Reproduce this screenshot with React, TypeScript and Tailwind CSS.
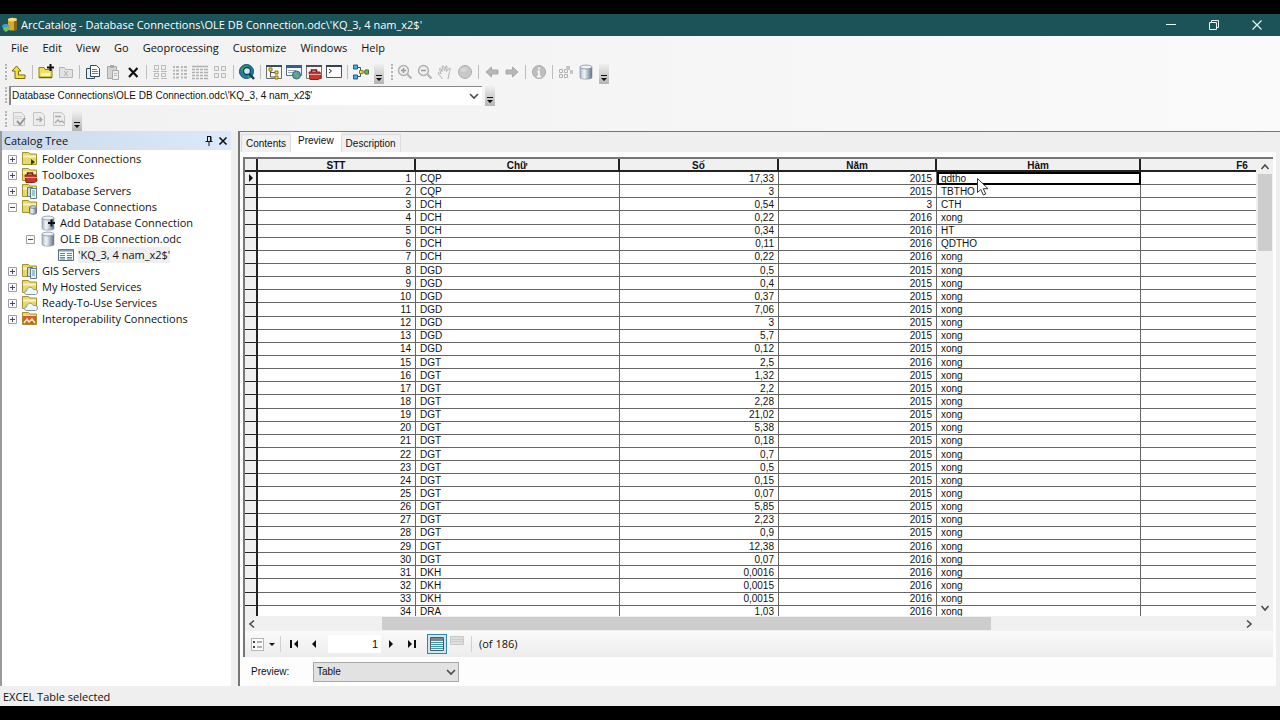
import { useState } from "react";
import type { ReactNode } from "react";

interface Tool {
  label: string;
  icon: ReactNode;
}

interface TreeNode {
  label: string;
  icon: ReactNode;
  depth: number;
  state: "open" | "closed" | "leaf";
  selected?: boolean;
}

type Row = [string, string, string, string];

// STT is the row index, the rest: Chữ, Số, Năm, Hàm
const ROWS: Row[] = [
  ["CQP", "17,33", "2015", "qdtho"],
  ["CQP", "3", "2015", "TBTHO"],
  ["DCH", "0,54", "3", "CTH"],
  ["DCH", "0,22", "2016", "xong"],
  ["DCH", "0,34", "2016", "HT"],
  ["DCH", "0,11", "2016", "QDTHO"],
  ["DCH", "0,22", "2016", "xong"],
  ["DGD", "0,5", "2015", "xong"],
  ["DGD", "0,4", "2015", "xong"],
  ["DGD", "0,37", "2015", "xong"],
  ["DGD", "7,06", "2015", "xong"],
  ["DGD", "3", "2015", "xong"],
  ["DGD", "5,7", "2015", "xong"],
  ["DGD", "0,12", "2015", "xong"],
  ["DGT", "2,5", "2016", "xong"],
  ["DGT", "1,32", "2015", "xong"],
  ["DGT", "2,2", "2015", "xong"],
  ["DGT", "2,28", "2015", "xong"],
  ["DGT", "21,02", "2015", "xong"],
  ["DGT", "5,38", "2015", "xong"],
  ["DGT", "0,18", "2015", "xong"],
  ["DGT", "0,7", "2015", "xong"],
  ["DGT", "0,5", "2015", "xong"],
  ["DGT", "0,15", "2015", "xong"],
  ["DGT", "0,07", "2015", "xong"],
  ["DGT", "5,85", "2015", "xong"],
  ["DGT", "2,23", "2015", "xong"],
  ["DGT", "0,9", "2015", "xong"],
  ["DGT", "12,38", "2016", "xong"],
  ["DGT", "0,07", "2016", "xong"],
  ["DKH", "0,0016", "2016", "xong"],
  ["DKH", "0,0015", "2016", "xong"],
  ["DKH", "0,0015", "2016", "xong"],
  ["DRA", "1,03", "2016", "xong"],
];

const MENUS = ["File", "Edit", "View", "Go", "Geoprocessing", "Customize", "Windows", "Help"];

function Svg({ children }: { children: ReactNode }) {
  return (
    <svg viewBox="0 0 16 16" className="h-4 w-4 shrink-0" fill="none" aria-hidden="true">
      {children}
    </svg>
  );
}

function Folder({ children }: { children?: ReactNode }) {
  return (
    <Svg>
      <path d="M.5 13.500v-12h6l1.500 1.500h6.500v10.500z" fill="#e6d86c" stroke="#a3922f" />
      <path d="M1 5.500h13" stroke="#fbf6bd" strokeWidth="2" />
      {children}
    </Svg>
  );
}

const cylinder = (
  <>
    <path d="M2 3v10.500c0 2.200 12 2.200 12 0V3z" fill="url(#metal)" stroke="#8390a0" strokeWidth=".6" />
    <ellipse cx="8" cy="3" rx="6" ry="1.900" fill="#eef3f8" stroke="#8793a2" strokeWidth=".8" />
  </>
);

const serverBox = (
  <>
    <path d="M5.500 4.500h5v9h-5z" fill="#c9dde2" stroke="#5f7d88" />
    <path d="M8.500 5.500h6v10h-6z" fill="#e3eff2" stroke="#5f7d88" />
    <path d="M10 8h3M10 10h3M10 12h3" stroke="#5f9aa8" />
  </>
);

const cloud = (
  <path
    d="M4 15.500c-2-.5-2-3.500.5-3.500 0-4 5.500-5 7-1.500 3-.5 4 1 4 2.500s-1 2.500-2 2.500z"
    fill="#f3f8fc"
    stroke="#7f98ad"
  />
);

const toolbox = (
  <>
    <path d="M5.500 8V6h5v2" stroke="#6d1a16" strokeWidth="1.500" />
    <path d="M3 8h11l1 6-3 1.500H4z" fill="#c9382f" stroke="#8b201b" />
    <path d="M3 10.500h12" stroke="#f0a59c" />
  </>
);

const FILE_TOOLS: Tool[][] = [
  [
    {
      label: "Up One Level",
      icon: (
        <Svg>
          <path d="M5.500 2 10 7H7.500v4H14v3.500H4V7H1z" fill="#f7e03c" stroke="#7a6a10" />
        </Svg>
      ),
    },
  ],
  [
    {
      label: "Connect To Folder",
      icon: (
        <Svg>
          <path d="M1 13.500v-10h5l1 2h7v8z" fill="#efe057" stroke="#8f7f1d" />
          <path d="M3 10.500h9" stroke="#fff9b0" strokeWidth="3" />
          <path d="M1 13.500h13" stroke="#6f6415" strokeWidth="1.500" />
          <path d="M12.500 0v7M9 3.500h7" stroke="#111" strokeWidth="2" />
        </Svg>
      ),
    },
    {
      label: "Disconnect From Folder",
      icon: (
        <Svg>
          <path d="M1.500 13.500v-10h5l1 2h7v8z" fill="#e3e3e3" stroke="#b5b5b5" />
          <path d="m6 7 4 5m0-5-4 5" stroke="#b0b0b0" />
        </Svg>
      ),
    },
  ],
  [
    {
      label: "Copy",
      icon: (
        <Svg>
          <path d="M1.500 4.500h8v10h-8z" fill="#e5f0f7" stroke="#31495c" />
          <path d="M5.500 1.500h6l3 3v8h-9z" fill="#fff" stroke="#31495c" />
          <path d="M7 5.500h5M7 7.500h6M7 9.500h6" stroke="#4f87ad" />
        </Svg>
      ),
    },
    {
      label: "Paste",
      icon: (
        <Svg>
          <path d="M2.500 2.500h9v12h-9z" fill="#d3d3d3" stroke="#a8a8a8" />
          <path d="M5 1h4v3H5z" fill="#aaa" />
          <path d="M7.500 6.500h6v9h-6z" fill="#eee" stroke="#a8a8a8" />
          <path d="M9 9.500h3M9 11.500h3" stroke="#b5b5b5" />
        </Svg>
      ),
    },
    {
      label: "Delete",
      icon: (
        <Svg>
          <path d="m4 4 8.500 9M12.500 4 4 13" stroke="#111" strokeWidth="2.200" />
        </Svg>
      ),
    },
  ],
  [
    {
      label: "Large Icons",
      icon: (
        <Svg>
          <path d="M2.500 1.500h4v4h-4zM9.500 1.500h4v4h-4zM2.500 9.500h4v3h-4zM9.500 9.500h4v3h-4z" stroke="#b9b9b9" />
          <path d="M1 7.500h6M9 7.500h6M1 14.500h6M9 14.500h6" stroke="#b9b9b9" />
        </Svg>
      ),
    },
    {
      label: "List",
      icon: (
        <Svg>
          <path
            d="M1 3h2m1 0h3M9 3h2m1 0h3M1 6.500h2m1 0h3M9 6.500h2m1 0h3M1 10h2m1 0h3M9 10h2m1 0h3M1 13.500h2m1 0h3M9 13.500h2m1 0h3"
            stroke="#b9b9b9"
            strokeWidth="2"
          />
        </Svg>
      ),
    },
    {
      label: "Details",
      icon: (
        <Svg>
          <path
            d="M0 2.500h16M0 5.500h3m1 0h3m1 0h3m1 0h4M0 8.500h3m1 0h3m1 0h3m1 0h4M0 11.500h3m1 0h3m1 0h3m1 0h4M0 14.500h3m1 0h3m1 0h3m1 0h4"
            stroke="#b0b0b0"
            strokeWidth="1.400"
          />
        </Svg>
      ),
    },
    {
      label: "Thumbnails",
      icon: (
        <Svg>
          <path d="M2.500 2.500h4v4h-4zM9.500 2.500h4v4h-4zM2.500 9.500h4v4h-4zM9.500 9.500h4v4h-4z" fill="#ededed" stroke="#b9b9b9" />
        </Svg>
      ),
    },
  ],
  [
    {
      label: "Launch ArcMap",
      icon: (
        <Svg>
          <circle cx="7.500" cy="7.500" r="7" fill="#1e7fa5" stroke="#174f70" />
          <path d="M2 5c2-3 5-4 7-3l-2 4-3 3zM8 12l4-2 1 2-4 2z" fill="#3f9e54" />
          <circle cx="8" cy="7" r="3.500" fill="#c8ecf5" stroke="#0d3c5c" strokeWidth="1.300" />
          <path d="m10.500 10 4.500 5" stroke="#133c5c" strokeWidth="2.500" />
        </Svg>
      ),
    },
  ],
  [
    {
      label: "Catalog Tree",
      icon: (
        <Svg>
          <path d="M.5 1.500h15v13H.5z" fill="#f7f8f4" stroke="#66706d" />
          <path d="M0 2h16" stroke="#3c4c5f" strokeWidth="2" />
          <path d="M4.500 5v8h5M4.500 8.500h5" stroke="#555" />
          <path d="M3 4h3v3H3zM9 7h3v3H9zM9 12h3v3H9z" fill="#eedc43" stroke="#877619" />
        </Svg>
      ),
    },
    {
      label: "Item Description",
      icon: (
        <Svg>
          <path d="M.5 1.500h15v10H.5z" fill="#f5f8fb" stroke="#5e6b7a" />
          <path d="M0 2.500h16" stroke="#345d92" strokeWidth="3" />
          <path d="M2 6.500h8M2 8.500h5" stroke="#9aa9b8" />
          <circle cx="10.500" cy="11" r="4" fill="#4c99c9" stroke="#386a83" />
          <path d="M8 10c1-3 3-2 3 0s3 1 2 3-4 0-5-3z" fill="#6cad55" />
        </Svg>
      ),
    },
    {
      label: "ArcToolbox",
      icon: (
        <Svg>
          <path d="M.5 1.500h15v13H.5z" fill="#f6f6f6" stroke="#777" />
          <path d="M0 2h16" stroke="#5b4b57" strokeWidth="2" />
          {toolbox}
        </Svg>
      ),
    },
    {
      label: "Python",
      icon: (
        <Svg>
          <path d="M.5 1.500h15v12H.5z" fill="#fdfdfd" stroke="#4d5561" />
          <path d="M0 2h16" stroke="#33415a" strokeWidth="2" />
          <path d="m3 5 2.500 2L3 9" stroke="#222" />
        </Svg>
      ),
    },
  ],
  [
    {
      label: "ModelBuilder",
      icon: (
        <Svg>
          <path d="M4 3.500h3.500v9H4M7.500 8h6" stroke="#44555f" />
          <path d="M.5 1h4v4h-4zM.5 11h4v4h-4z" fill="#46aee0" stroke="#1e628d" />
          <path d="M6.500 6.500h3.500v3H6.500z" fill="#f1dd3b" stroke="#8d7c16" />
          <path d="M12 6h3.500v4H12z" fill="#6abe51" stroke="#39772a" />
        </Svg>
      ),
    },
  ],
];

const GEO_TOOLS: Tool[][] = [
  [
    {
      label: "Zoom In",
      icon: (
        <Svg>
          <circle cx="6.500" cy="6.500" r="5" fill="#eee" stroke="#b0b0b0" strokeWidth="1.400" />
          <path d="M6.500 4v5M4 6.500h5" stroke="#999" strokeWidth="1.400" />
          <path d="m10.500 10.500 4 4" stroke="#b3b3b3" strokeWidth="2.200" />
        </Svg>
      ),
    },
    {
      label: "Zoom Out",
      icon: (
        <Svg>
          <circle cx="6.500" cy="6.500" r="5" fill="#eee" stroke="#b0b0b0" strokeWidth="1.400" />
          <path d="M4 6.500h5" stroke="#999" strokeWidth="1.400" />
          <path d="m10.500 10.500 4 4" stroke="#b3b3b3" strokeWidth="2.200" />
        </Svg>
      ),
    },
    {
      label: "Pan",
      icon: (
        <Svg>
          <path
            d="M5 15c0-2-3.500-4-4-6 1-1 2 .5 3 1L2.500 4.500c1-1 1.500 0 2.500 3L5.500 2c1-1 1.500 0 2 5l1.500-5c1-.5 1.500 0 .5 5.500L12.500 4c1 0 1 .5-.5 6l-1 5"
            fill="#f2f2f2"
            stroke="#b4b4b4"
          />
        </Svg>
      ),
    },
    {
      label: "Full Extent",
      icon: (
        <Svg>
          <circle cx="8" cy="8" r="6.500" fill="#c8c8c8" stroke="#b0b0b0" />
          <path d="M4 5c2-2 5-2 6 0s-2 3-4 3-3-1-2-3z" fill="#d6d6d6" />
        </Svg>
      ),
    },
  ],
  [
    {
      label: "Go Back",
      icon: (
        <Svg>
          <path d="m2 8 5.500-5v3H14v4H7.500v3z" fill="#b7b7b7" stroke="#a8a8a8" />
        </Svg>
      ),
    },
    {
      label: "Go Forward",
      icon: (
        <Svg>
          <path d="M14 8 8.500 3v3H2v4h6.500v3z" fill="#b7b7b7" stroke="#a8a8a8" />
        </Svg>
      ),
    },
  ],
  [
    {
      label: "Identify",
      icon: (
        <Svg>
          <circle cx="8" cy="8" r="6.500" fill="#bebebe" stroke="#a9a9a9" />
          <path d="M8 3.500v2M6.500 7.500H8V12M6 12.500h4" stroke="#f5f5f5" strokeWidth="1.800" />
        </Svg>
      ),
    },
  ],
  [
    {
      label: "Create Thumbnail",
      icon: (
        <Svg>
          <path d="M1.500 5.500h3v3h-3zM6.500 5.500h3v3h-3zM1.500 10.500h3v3h-3zM6.500 10.500h3v3h-3z" stroke="#b2b2b2" />
          <path d="M8 2h4v4H8zM12 6h3v4h-3z" fill="#c6c6c6" />
        </Svg>
      ),
    },
    { label: "Database", icon: <Svg>{cylinder}</Svg> },
  ],
];

const METADATA_TOOLS: Tool[][] = [
  [
    {
      label: "Validate Metadata",
      icon: (
        <Svg>
          <path d="M2.500 1.500h8l3 3v10h-11z" fill="#ececec" stroke="#c5c5c5" />
          <path d="M4 5.500h7M4 7.500h7" stroke="#d3d3d3" />
          <path d="m6 10 3 3.500L14 7" stroke="#969696" strokeWidth="2" />
        </Svg>
      ),
    },
    {
      label: "Export Metadata",
      icon: (
        <Svg>
          <path d="M2.500 1.500h8l3 3v10h-11z" fill="#ececec" stroke="#c5c5c5" />
          <path d="M5 8.500h6M8.500 6l2.500 2.500L8.500 11" stroke="#ababab" strokeWidth="1.300" />
        </Svg>
      ),
    },
    {
      label: "Import Metadata",
      icon: (
        <Svg>
          <path d="M2.500 1.500h8l3 3v10h-11z" fill="#ececec" stroke="#c5c5c5" />
          <path d="M4 5.500h6M4 12l3-3 2 2 2-1 2 2" stroke="#ababab" strokeWidth="1.300" />
        </Svg>
      ),
    },
  ],
];

const TREE: TreeNode[] = [
  {
    label: "Folder Connections",
    depth: 0,
    state: "closed",
    icon: (
      <Folder>
        <path d="M9 8v6l4-3z" fill="#3d3a18" />
      </Folder>
    ),
  },
  { label: "Toolboxes", depth: 0, state: "closed", icon: <Folder>{toolbox}</Folder> },
  { label: "Database Servers", depth: 0, state: "closed", icon: <Folder>{serverBox}</Folder> },
  {
    label: "Database Connections",
    depth: 0,
    state: "open",
    icon: (
      <Folder>
        <path d="M7.500 8v6c0 1.500 7 1.500 7 0V8z" fill="url(#metal)" stroke="#6d7884" />
        <ellipse cx="11" cy="8" rx="3.500" ry="1.200" fill="#f2f5f8" stroke="#6d7884" />
      </Folder>
    ),
  },
  {
    label: "Add Database Connection",
    depth: 1,
    state: "leaf",
    icon: (
      <Svg>
        {cylinder}
        <path d="M11.500 4.500v7M8 8h7" stroke="#111" strokeWidth="2" />
      </Svg>
    ),
  },
  { label: "OLE DB Connection.odc", depth: 1, state: "open", icon: <Svg>{cylinder}</Svg> },
  {
    label: "'KQ_3, 4 nam_x2$'",
    depth: 2,
    state: "leaf",
    selected: true,
    icon: (
      <Svg>
        <path d="M.5 2.500h15v11H.5z" fill="#f4f9fb" stroke="#596d7a" />
        <path d="M1 3.500h14" stroke="#7c9bad" strokeWidth="2" />
        <path d="M2 6.500h5M9 6.500h5M2 8.500h5M9 8.500h5M2 10.500h5M9 10.500h5M2 12h5M9 12h5" stroke="#5b87a0" />
      </Svg>
    ),
  },
  { label: "GIS Servers", depth: 0, state: "closed", icon: <Folder>{serverBox}</Folder> },
  { label: "My Hosted Services", depth: 0, state: "closed", icon: <Folder>{cloud}</Folder> },
  { label: "Ready-To-Use Services", depth: 0, state: "closed", icon: <Folder>{cloud}</Folder> },
  {
    label: "Interoperability Connections",
    depth: 0,
    state: "closed",
    icon: (
      <Folder>
        <path d="M1 5h13v8H1z" fill="#dd5a25" />
        <path d="m2 12 3-4 2 3 3-3 3 4" stroke="#fff0c9" strokeWidth="1.500" />
      </Folder>
    ),
  },
];

const TREE_INDENT = ["pl-[6px]", "pl-6", "pl-[44px]"];

function Grip() {
  return <span className="h-4 w-1 shrink-0 border-l-2 border-dotted border-[#b5b5b5]" />;
}

function Overflow({ label }: { label: string }) {
  return (
    <button
      type="button"
      aria-label={label}
      className="ml-[3px] flex h-5 w-[10px] shrink-0 items-end justify-center self-end bg-linear-to-b from-[#f0f0f0] to-[#b4b4b4] pb-[3px]"
    >
      <svg viewBox="0 0 6 6" className="h-[6px] w-[6px]" aria-hidden="true">
        <path d="M0 0h6v1H0zM0 3h6L3 6z" fill="#111" />
      </svg>
    </button>
  );
}

function ToolGroups({ groups }: { groups: Tool[][] }) {
  return (
    <div className="flex items-center">
      {groups.map((tools, i) => (
        <div key={i} className="flex items-center">
          {i > 0 && <span className="mx-[3px] h-[14px] w-px bg-[#bdbdbd]" />}
          {tools.map((tool) => (
            <button
              key={tool.label}
              type="button"
              aria-label={tool.label}
              className="flex h-5 w-5 items-center justify-center"
            >
              {tool.icon}
            </button>
          ))}
        </div>
      ))}
    </div>
  );
}

function Chevron({ d }: { d: string }) {
  return (
    <svg viewBox="0 0 10 10" className="h-[10px] w-[10px]" fill="none" aria-hidden="true">
      <path d={d} stroke="#4b4b4b" strokeWidth="1.600" />
    </svg>
  );
}

function TitleBar() {
  return (
    <header className="flex h-[22px] shrink-0 items-center bg-[#1b5358] text-white">
      <svg viewBox="0 0 16 16" className="ml-[2px] h-4 w-4" fill="none" aria-hidden="true">
        <path d="M6 2v10c0 2 9 2 9 0V2z" fill="#d9a927" />
        <path d="M12 2h3v11l-3 1z" fill="#8f6510" />
        <ellipse cx="10.500" cy="2.500" rx="4.500" ry="1.800" fill="#f8e07d" />
        <path d="M0 9c2-3 6-3 7 0 1 4-3 6-5 5z" fill="#3f9bd2" />
        <path d="M1 12c2-3 4-1 5-3l2 3-4 3z" fill="#79bf43" />
      </svg>
      <h1 className="ml-[3px] grow truncate">
        ArcCatalog - Database Connections\OLE DB Connection.odc\'KQ_3, 4 nam_x2$'
      </h1>
      <div className="flex text-[#e8f3f4]">
        <button type="button" aria-label="Minimize" className="flex h-5 w-[43px] items-center justify-center">
          <svg viewBox="0 0 10 10" className="h-[10px] w-[10px]" aria-hidden="true">
            <path d="M0 4.500h10" stroke="currentColor" />
          </svg>
        </button>
        <button type="button" aria-label="Restore" className="flex h-5 w-[43px] items-center justify-center">
          <svg viewBox="0 0 10 10" className="h-[10px] w-[10px]" fill="none" aria-hidden="true">
            <path d="M.5 2.500h7v7h-7zM2.500 2.500v-2h7v7h-2" stroke="currentColor" />
          </svg>
        </button>
        <button type="button" aria-label="Close" className="mr-[2px] flex h-5 w-[43px] items-center justify-center">
          <svg viewBox="0 0 10 10" className="h-[10px] w-[10px]" aria-hidden="true">
            <path d="m.5.5 9 9M9.500.5l-9 9" stroke="currentColor" strokeWidth="1.200" />
          </svg>
        </button>
      </div>
    </header>
  );
}

function CatalogTree() {
  return (
    <aside className="flex w-[231px] shrink-0 flex-col border-l-2 border-[#9a9a9a] bg-white">
      <div className="flex h-[19px] shrink-0 items-center bg-linear-to-r from-[#ccd9e9] to-[#dbe9f8] pl-[2px] pr-px">
        <h2 className="grow">Catalog Tree</h2>
        <button type="button" aria-label="Auto Hide" className="flex h-4 w-[14px] items-center justify-center">
          <svg viewBox="0 0 10 10" className="h-[10px] w-[10px]" fill="none" aria-hidden="true">
            <path d="M3 .5h4v5M3.500.5v5M1.500 5.500h7M5 6v4M6.500 1v4" stroke="#111" />
          </svg>
        </button>
        <button type="button" aria-label="Close Catalog Tree" className="flex h-4 w-[14px] items-center justify-center">
          <svg viewBox="0 0 10 10" className="h-[10px] w-[10px]" aria-hidden="true">
            <path d="m1.500 1.500 7 7M8.500 1.500l-7 7" stroke="#111" strokeWidth="1.600" />
          </svg>
        </button>
      </div>
      <ul className="pt-px">
        {TREE.map((node) => (
          <li key={node.label} className={"flex h-4 items-center " + TREE_INDENT[node.depth]}>
            {node.state === "leaf" ? (
              node.depth < 2 && <span className="w-[10px] shrink-0" />
            ) : (
              <button
                type="button"
                aria-label={(node.state === "open" ? "Collapse " : "Expand ") + node.label}
                className="w-[10px] shrink-0"
              >
                <svg viewBox="0 0 9 9" className="h-[9px] w-[9px]" fill="none" aria-hidden="true">
                  <path d="M.5.5h8v8h-8z" fill="#fafafa" stroke="#a0a0a0" />
                  <path d={node.state === "open" ? "M2 4.500h5" : "M2 4.500h5M4.500 2v5"} stroke="#3a4d70" />
                </svg>
              </button>
            )}
            <button type="button" className={"flex items-center gap-1 " + (node.depth === 2 ? "pl-3" : "pl-1")}>
              {node.icon}
              <span className={node.selected ? "bg-[#efefef]" : ""}>{node.label}</span>
            </button>
          </li>
        ))}
      </ul>
    </aside>
  );
}

function DataTable() {
  const head =
    "h-[13px] border-b-2 border-r-2 border-[#222] bg-[#f0f0f0] p-0 pt-[2px] text-center align-bottom font-bold leading-[9px]";
  const cell = "border-b border-r border-[#666] px-1 py-0";
  return (
    <table className="h-[460px] w-[1100px] table-fixed border-separate border-spacing-0 font-['Liberation_Sans',Arial,sans-serif] text-[10px] leading-[11px]">
      <colgroup>
        <col className="w-[13px]" />
        <col className="w-[158px]" />
        <col className="w-[204px]" />
        <col className="w-[159px]" />
        <col className="w-[158px]" />
        <col className="w-[204px]" />
        <col className="w-[204px]" />
      </colgroup>
      <thead>
        <tr>
          <th className={head} aria-label="Row selector" />
          {["STT", "Chữ", "Số", "Năm", "Hàm", "F6"].map((name) => (
            <th key={name} scope="col" className={head}>
              {name}
            </th>
          ))}
        </tr>
      </thead>
      <tbody>
        {ROWS.map(([chu, so, nam, ham], i) => (
          <tr key={i}>
            <td className="border-b border-r-2 border-[#222] bg-[#f0f0f0] p-0">
              {i === 0 && (
                <svg viewBox="0 0 4 8" className="mx-auto h-2 w-1" aria-hidden="true">
                  <path d="M0 0v8l4-4z" fill="#111" />
                </svg>
              )}
            </td>
            <td className={cell + " text-right"}>{i + 1}</td>
            <td className={cell}>{chu}</td>
            <td className={cell + " text-right"}>{so}</td>
            <td className={cell + " text-right"}>{nam}</td>
            <td className={cell + (i === 0 ? " outline-2 -outline-offset-2 outline-black" : "")}>{ham}</td>
            <td className={cell} />
          </tr>
        ))}
      </tbody>
    </table>
  );
}

function RecordBar() {
  const nav = "flex h-5 w-5 items-center justify-center";
  return (
    <div className="flex h-[26px] shrink-0 items-center bg-linear-to-b from-[#fafafa] to-[#ececec] pl-[6px]">
      <button type="button" aria-label="Table Options" className="flex w-6 items-center justify-between">
        <svg viewBox="0 0 13 13" className="h-[13px] w-[13px]" fill="none" aria-hidden="true">
          <path d="M.5.5h12v12H.5z" fill="#fbfbfb" stroke="#777" strokeDasharray="1 1" />
          <path d="M2 4h2M2 9h2" stroke="#444" strokeWidth="2" />
          <path d="M6 4h5M6 9h5" stroke="#666" />
        </svg>
        <svg viewBox="0 0 6 3" className="h-[3px] w-[6px]" aria-hidden="true">
          <path d="M0 0h6L3 3z" fill="#111" />
        </svg>
      </button>
      <span className="ml-[5px] mr-[3px] h-4 w-px bg-[#d0d0d0]" />
      <button type="button" aria-label="First record" className={nav}>
        <svg viewBox="0 0 9 8" className="h-2 w-[9px]" aria-hidden="true">
          <path d="M0 0h2v8H0zM8 0v8L4 4z" fill="#111" />
        </svg>
      </button>
      <button type="button" aria-label="Previous record" className={nav}>
        <svg viewBox="0 0 4 8" className="h-2 w-1" aria-hidden="true">
          <path d="M4 0v8L0 4z" fill="#111" />
        </svg>
      </button>
      <input
        type="text"
        aria-label="Record number"
        defaultValue="1"
        className="ml-1 h-[18px] w-[53px] bg-white px-[3px] text-right font-['Liberation_Sans',Arial,sans-serif]"
      />
      <button type="button" aria-label="Next record" className={nav}>
        <svg viewBox="0 0 4 8" className="h-2 w-1" aria-hidden="true">
          <path d="M0 0v8l4-4z" fill="#111" />
        </svg>
      </button>
      <button type="button" aria-label="Last record" className={nav}>
        <svg viewBox="0 0 9 8" className="h-2 w-[9px]" aria-hidden="true">
          <path d="M7 0h2v8H7zM1 0v8l4-4z" fill="#111" />
        </svg>
      </button>
      <button
        type="button"
        aria-label="Show all records"
        className="ml-[6px] flex h-5 w-5 items-center justify-center border border-[#2f88a8] bg-[#cfe6f0]"
      >
        <svg viewBox="0 0 14 14" className="h-[14px] w-[14px]" fill="none" aria-hidden="true">
          <path d="M.5.5h13v13H.5z" fill="#e8f4f6" stroke="#4c5c66" />
          <path d="M1 2.500h12" stroke="#77858c" strokeWidth="3" />
          <path d="M1 5.500h12M1 7.500h12M1 9.500h12M1 11.500h12" stroke="#3f97a8" />
        </svg>
      </button>
      <button type="button" aria-label="Show selected records" className="flex h-5 w-5 justify-center pt-[2px]">
        <svg viewBox="0 0 14 9" className="h-[9px] w-[14px]" fill="none" aria-hidden="true">
          <path d="M.5.5h13v8H.5z" fill="#dedede" stroke="#c9c9c9" />
          <path d="M1 3.500h12M1 5.500h12" stroke="#cdcdcd" />
        </svg>
      </button>
      <span className="ml-1 mr-[7px] h-4 w-px bg-[#d0d0d0]" />
      <span>(of 186)</span>
    </div>
  );
}

function PreviewPane() {
  const [tab, setTab] = useState("Preview");
  return (
    <main className="relative flex min-w-0 grow flex-col border-l-2 border-t border-[#777] bg-[#efefef] pr-1">
      <div
        role="tablist"
        className="flex h-[20px] shrink-0 items-end pl-px font-['Liberation_Sans',Arial,sans-serif] text-[10px]"
      >
        {["Contents", "Preview", "Description"].map((name) => (
          <button
            key={name}
            type="button"
            role="tab"
            aria-selected={tab === name}
            onClick={() => setTab(name)}
            className={
              "border border-b-0 " +
              (tab === name
                ? "h-[20px] border-white bg-white px-[6px] pb-[3px]"
                : "h-[18px] border-[#dcdcdc] bg-[#f1f1f1] px-[4px]")
            }
          >
            {name}
          </button>
        ))}
      </div>
      <div className="flex min-h-0 grow flex-col bg-[#fdfdfd] pl-[3px] pr-[3px] pt-[5px]">
        <div className="flex min-h-0 grow flex-col border-l-2 border-t-2 border-[#777]">
          <div className="flex min-h-0 grow">
            <div className="min-w-0 grow overflow-hidden bg-white">
              <DataTable />
            </div>
            {/* vertical scroll bar */}
            <div className="flex w-[17px] shrink-0 flex-col items-center bg-[#f0f0f0]">
              <button type="button" aria-label="Scroll up" className="flex h-[15px] items-center">
                <Chevron d="m1.500 7 3.500-4 3.500 4" />
              </button>
              <div className="h-[77px] w-[14px] bg-[#cdcdcd]" />
              <button type="button" aria-label="Scroll down" className="mt-auto flex h-4 items-center">
                <Chevron d="m1.500 3 3.500 4 3.500-4" />
              </button>
            </div>
          </div>
          {/* horizontal scroll bar */}
          <div className="flex h-[15px] shrink-0 items-center bg-[#f0f0f0] pr-[17px]">
            <button type="button" aria-label="Scroll left" className="flex w-[14px] justify-center">
              <Chevron d="M7 1.500 3 5l4 3.500" />
            </button>
            <div className="flex h-full grow py-px">
              <div className="w-1/8" />
              <div className="w-[62%] bg-[#cdcdcd]" />
            </div>
            <button type="button" aria-label="Scroll right" className="flex w-[14px] justify-center">
              <Chevron d="m3 1.500 4 3.500-4 3.500" />
            </button>
          </div>
          <RecordBar />
        </div>
        <div className="flex h-[29px] shrink-0 items-center pl-2 font-['Liberation_Sans',Arial,sans-serif] text-[10px]">
          <label htmlFor="preview-mode" className="w-[62px]">
            Preview:
          </label>
          <div className="relative">
            <select
              id="preview-mode"
              defaultValue="Table"
              className="h-5 w-[146px] appearance-none border border-[#a8a8a8] bg-[#e2e2e2] pl-[3px]"
            >
              <option>Table</option>
              <option>Geography</option>
            </select>
            <span className="pointer-events-none absolute right-[3px] top-[5px]">
              <Chevron d="M1 3l4 4 4-4" />
            </span>
          </div>
        </div>
      </div>
      {/* mouse pointer */}
      <svg viewBox="0 0 12 18" className="absolute left-[737px] top-[46px] h-[18px] w-3" aria-hidden="true">
        <path d="M.5.500v14l3.300-3 2.500 5.500 2.500-1-2.500-5.300H11z" fill="#fff" stroke="#333" />
      </svg>
    </main>
  );
}

export default function App() {
  return (
    <div className="flex h-screen flex-col bg-black py-[14px] font-['Open_Sans','Noto_Sans',sans-serif] text-[11px] leading-4 text-[#111]">
      {/* shared gradient for the database cylinders */}
      <svg className="absolute h-0 w-0" aria-hidden="true">
        <linearGradient id="metal">
          <stop offset="0" stopColor="#a5b2c2" />
          <stop offset="0.350" stopColor="#f4f7fa" />
          <stop offset="1" stopColor="#5f7187" />
        </linearGradient>
      </svg>
      <TitleBar />
      <div className="flex min-h-0 grow flex-col bg-linear-to-r from-[#f1f1f1] to-[#fafafa]">
        <nav className="flex h-6 shrink-0 items-center gap-[14px] pl-[11px]">
          {MENUS.map((name) => (
            <button key={name} type="button">
              {name}
            </button>
          ))}
        </nav>
        <div className="flex h-6 shrink-0 items-center pl-[5px]">
          <Grip />
          <ToolGroups groups={FILE_TOOLS} />
          <Overflow label="File toolbar options" />
          <span className="w-[7px]" />
          <Grip />
          <ToolGroups groups={GEO_TOOLS} />
          <Overflow label="Geography toolbar options" />
        </div>
        <div className="flex h-[22px] shrink-0 items-center pl-[5px]">
          <Grip />
          <div className="flex h-[19px] w-[473px] items-center border-l-2 border-t border-[#888] bg-white">
            <input
              type="text"
              aria-label="Location"
              defaultValue="Database Connections\OLE DB Connection.odc\'KQ_3, 4 nam_x2$'"
              className="min-w-0 grow pl-px font-['Liberation_Sans',Arial,sans-serif] text-[10px]"
            />
            <button type="button" aria-label="Recent locations" className="flex w-4 justify-center">
              <Chevron d="m1 3 4 4 4-4" />
            </button>
          </div>
          <Overflow label="Location toolbar options" />
        </div>
        <div className="flex h-[25px] shrink-0 items-center pl-[5px]">
          <Grip />
          <ToolGroups groups={METADATA_TOOLS} />
          <Overflow label="Metadata toolbar options" />
        </div>
        <div className="flex min-h-0 grow gap-[7px] bg-[#f0f0f0]">
          <CatalogTree />
          <PreviewPane />
        </div>
        <footer className="flex h-[20px] shrink-0 items-center bg-[#efefef] pl-[3px] pt-[2px]">
          EXCEL Table selected
        </footer>
      </div>
    </div>
  );
}
